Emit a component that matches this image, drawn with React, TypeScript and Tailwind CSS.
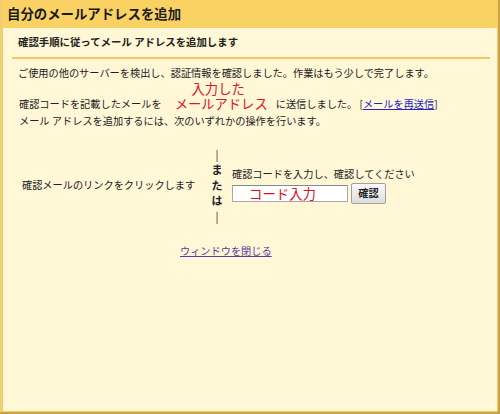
export default function App() {
  return (
    <div className="w-[500px] h-[414px] flex flex-col bg-[#fff7d6] border-r-2 border-b-2 border-[#c9a244] text-[#222] [font-family:'Noto_Sans_CJK_JP',sans-serif]">
      <div className="h-[28px] shrink-0 bg-[#fad264] border-l-[3px] border-[#f2cf6c] flex items-center pl-[4px] text-[13.4px] font-bold text-[#1a1a1a] leading-none">
        自分のメールアドレスを追加
      </div>
      <div className="flex-1 flex flex-col border-l-[3px] border-r border-b border-[#efcf70] text-[10.2px]">
        <div className="mt-[7px] pl-[15px] leading-[14px] font-bold text-[10.4px]">
          確認手順に従ってメール アドレスを追加します
        </div>
        <div className="mt-[8px] ml-[9px] mr-[7px] h-[1.5px] bg-[#f3c95c]" />
        <div className="mt-[7px] pl-[15px] leading-[14px]">
          ご使用の他のサーバーを検出し、認証情報を確認しました。作業はもう少しで完了します。
        </div>
        <div className="mt-[1px] pl-[16px] flex items-end">
          <span className="leading-[14px]">確認コードを記載したメールを</span>
          <span className="ml-[13px] mr-[8px] flex flex-col items-center text-[#e01428] text-[13.3px] leading-[15px]">
            <span className="pr-[6px]">入力した</span>
            <span>メールアドレス</span>
          </span>
          <span className="leading-[14px]">
            に送信しました。 [<span className="text-[#2222cc] underline">メールを再送信</span>]
          </span>
        </div>
        <div className="mt-[3px] pl-[16px] leading-[14px]">
          メール アドレスを追加するには、次のいずれかの操作を行います。
        </div>
        <div className="mt-[19px] flex items-center">
          <div className="pl-[19px] w-[208px] leading-[14px]">確認メールのリンクをクリックします</div>
          <div className="w-[12px] flex flex-col items-center font-bold text-[11px] leading-[15.5px] text-[#222]">
            <span className="font-normal text-[#333]">|</span>
            <span>ま</span>
            <span>た</span>
            <span>は</span>
            <span className="font-normal text-[#333]">|</span>
          </div>
          <div className="ml-[9px] flex flex-col">
            <div className="leading-[14px]">確認コードを入力し、確認してください</div>
            <div className="mt-[2px] flex items-center">
              <div className="w-[116px] h-[17px] bg-white border border-[#a8a8a8] border-t-[#888] pl-[16px] text-[#d8102a] text-[13.4px] leading-[15px]">
                コード入力
              </div>
              <button className="ml-[3px] w-[35px] h-[21px] rounded-[2px] border border-[#a0a0a0] bg-gradient-to-b from-[#fafafa] to-[#dcdcdc] font-bold text-[10.2px] leading-none text-[#222]">
                確認
              </button>
            </div>
          </div>
        </div>
        <div className="mt-[20px] pl-[177px] leading-[14px]">
          <span className="text-[#5a3d9c] underline">ウィンドウを閉じる</span>
        </div>
      </div>
    </div>
  );
}
